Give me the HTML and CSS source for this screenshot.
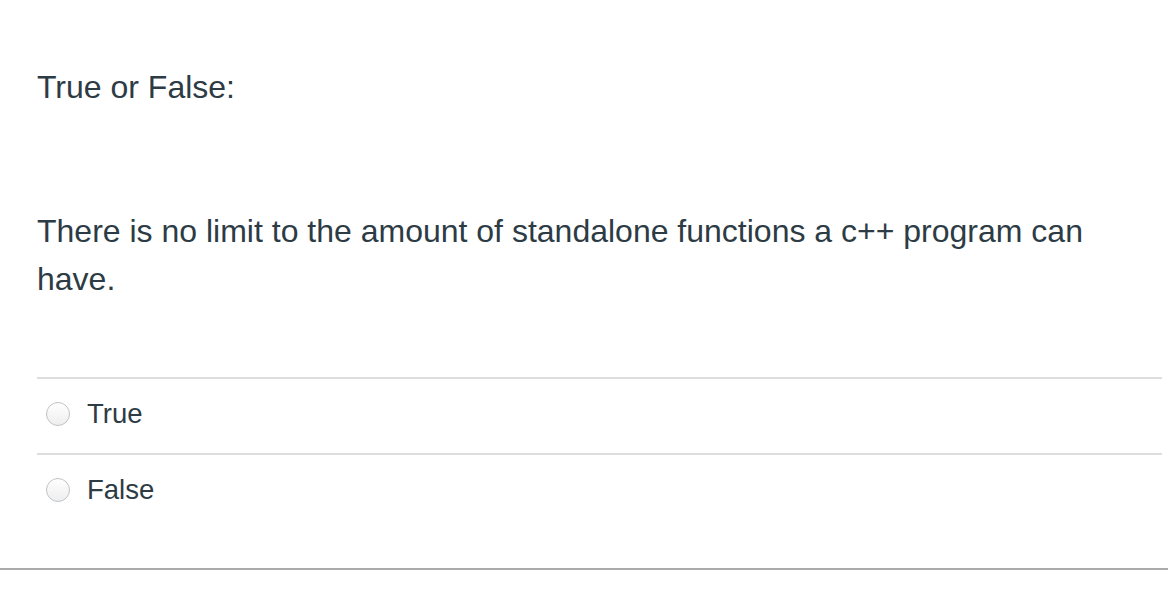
FILE: index.html
```html
<!DOCTYPE html>
<html>
<head>
<meta charset="utf-8">
<link rel="stylesheet" href="styles.css">
</head>
<body>
<div class="question">
  <div class="content">
    <p class="title">True or False:</p>
    <p class="text">There is no limit to the amount of standalone functions a c++ program can have.</p>
    <div class="answers">
      <label class="answer"><span class="radio"></span><span class="label">True</span></label>
      <label class="answer"><span class="radio"></span><span class="label">False</span></label>
    </div>
  </div>
</div>
<div class="footer-line"></div>
</body>
</html>
```
FILE: styles.css
```css
html, body {
  margin: 0;
  padding: 0;
  background: #ffffff;
}
body {
  font-family: "Liberation Sans", Arial, sans-serif;
  color: #2d3b45;
  width: 1168px;
}
.content {
  padding: 63px 6px 0 37px;
}
.title {
  margin: 0;
  font-size: 32px;
  line-height: 48px;
}
.text {
  margin: 96px 0 0 0;
  font-size: 32px;
  line-height: 48px;
}
.answers {
  margin-top: 74px;
  border-top: 2px solid #dddddd;
}
.answer {
  display: flex;
  align-items: center;
  height: 70px;
  padding-bottom: 4px;
  border-bottom: 2px solid #dddddd;
}
.answer:last-child {
  border-bottom: none;
}
.radio {
  width: 22px;
  height: 22px;
  margin-left: 9px;
  margin-right: 17px;
  border: 1px solid #bfc3c6;
  border-radius: 50%;
  background: linear-gradient(#ffffff, #eeeeee);
  flex: none;
}
.label {
  font-size: 27.5px;
  line-height: 32px;
}
.footer-line {
  margin-top: 39px;
  height: 2px;
  background: #aaaaaa;
}
```
